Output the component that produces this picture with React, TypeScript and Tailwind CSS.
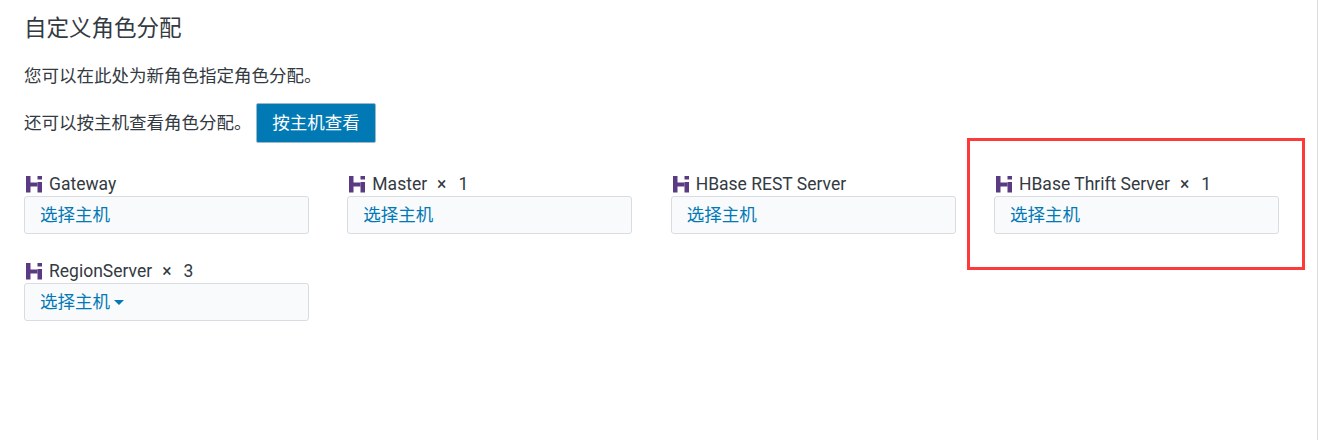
import React from "react";

const roles = [
  { name: "Gateway", count: null },
  { name: "Master", count: 1 },
  { name: "HBase REST Server", count: null },
  { name: "HBase Thrift Server", count: 1 },
  { name: "RegionServer", count: 3, caret: true },
];

const HBaseIcon: React.FC = () => (
  <svg className="mr-[6px] shrink-0" width="18" height="18" viewBox="0 0 18 18" fill="#5a3a82">
    <path d="M1 1h4.500v6.500h7.000v4H5.500v6H1z" />
    <rect x="12.500" y="1" width="4.500" height="3.500" />
    <rect x="12.500" y="7" width="4.500" height="10.500" />
  </svg>
);

const RoleCell: React.FC<{ name: string; count: number | null; caret?: boolean }> = ({ name, count, caret }) => (
  <div className="h-[87px]">
    <div className="flex h-[25px] items-center pl-px pt-[1px] text-[17.5px] text-[#333a42]">
      <HBaseIcon />
      <span>{name}</span>
      {count !== null && <span className="ml-[10px]">×</span>}
      {count !== null && <span className="ml-[12px]">{count}</span>}
    </div>
    <div className="flex h-[37.5px] items-center rounded-[3px] border border-[#d9dce1] bg-[#f9fafc] pl-[15px] text-[17.5px] text-[#0079b5]">
      选择主机
      {caret && <span className="ml-[4px] mt-[2px] h-0 w-0 border-x-[5px] border-t-[5px] border-x-transparent border-t-[#0079b5]" />}
    </div>
  </div>
);

export default function App() {
  return (
    <div
      className="relative h-[440px] w-[1318px] overflow-hidden border-r border-[#dddddd] bg-white pl-6 text-[#333a42]"
      style={{ fontFamily: '"Roboto", "Noto Sans CJK SC", sans-serif' }}
    >
      <h2 className="pt-[13px] text-[22.5px] leading-[30px] font-normal">自定义角色分配</h2>
      <p className="mt-[21px] text-[17.5px] leading-[24px]">您可以在此处为新角色指定角色分配。</p>
      <div className="mt-[15px] flex items-center">
        <span className="text-[17.5px]">还可以按主机查看角色分配。</span>
        <button className="ml-[4.5px] h-[40px] w-[120px] rounded-[2px] border border-[#9db9c9] bg-[#0079b5] text-[17.5px] text-white">
          按主机查看
        </button>
      </div>
      <div className="mt-[28px] grid w-[1255px] grid-cols-4 gap-x-[38.33px]">
        {roles.map((r) => (
          <RoleCell key={r.name} name={r.name} count={r.count} caret={r.caret} />
        ))}
      </div>
      {/* annotation box */}
      <div className="absolute left-[967px] top-[138px] h-[132px] w-[338px] border-[3px] border-[#fc3a3a]" />
    </div>
  );
}
